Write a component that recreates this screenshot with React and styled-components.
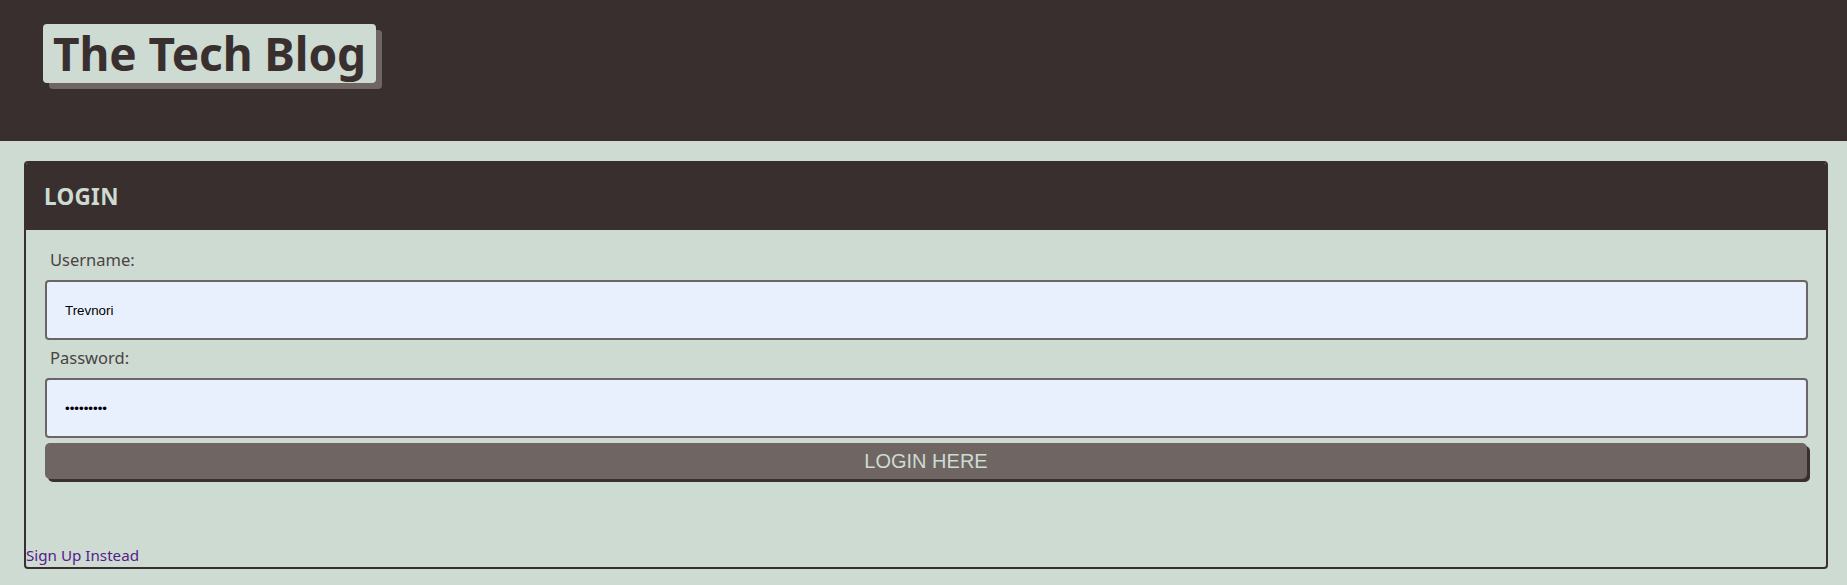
import React from "react";
import styled, { createGlobalStyle } from "styled-components";

const dark = "#392f2f";
const light = "#cddbd2";
const muted = "#6f6664";

const Global = createGlobalStyle`
  html, body { margin: 0; padding: 0; background: ${light}; }
  body { font-family: "Noto Sans", "Open Sans", sans-serif; }
`;

const Header = styled.header`
  background: ${dark};
  height: 141px;
  padding: 24px 0 0 43px;
  box-sizing: border-box;
`;

const Logo = styled.h1`
  display: inline-block;
  margin: 0;
  height: 59px;
  padding: 0 10px 0 10px;
  box-sizing: border-box;
  background: ${light};
  color: ${dark};
  border-radius: 4px;
  box-shadow: 6px 6px 0 ${muted};
  font-size: 46px;
  font-weight: 700;
  line-height: 59px;
  letter-spacing: -0.1px;
`;

const Main = styled.main`
  padding: 20px 19px 15px 24px;
`;

const Card = styled.section`
  border: 2px solid ${dark};
  border-radius: 4px;
  overflow: hidden;
`;

const CardHeader = styled.h2`
  margin: 0;
  background: ${dark};
  color: ${light};
  height: 67px;
  padding: 0 0 0 18px;
  display: flex;
  align-items: center;
  font-size: 22.5px;
  font-weight: 700;
  letter-spacing: 0.3px;
`;

const Form = styled.form`
  display: flex;
  flex-direction: column;
  padding: 16px 18px 0 19px;
`;

const Label = styled.label`
  display: block;
  margin: ${(p) => (p.$first ? "0" : "4px")} 0 7px 5px;
  font-size: 16.5px;
  line-height: 27px;
  color: #4a4343;
`;

const Input = styled.input`
  box-sizing: border-box;
  width: 100%;
  height: 60px;
  border: 2px solid #6b6565;
  border-radius: 4px;
  background: #e8f0fe;
  padding: 0 18px;
  font-family: "Liberation Sans", Arial, sans-serif;
  font-size: 13.33px;
  color: #000;
  outline: none;
`;

const Button = styled.button`
  margin-top: 5px;
  height: 36px;
  width: calc(100% - 1px);
  border: none;
  border-radius: 5px;
  background: ${muted};
  box-shadow: 3px 3px 0 ${dark};
  color: ${light};
  font-family: "Liberation Sans", Arial, sans-serif;
  font-size: 20px;
  cursor: pointer;
`;

const SignUp = styled.a`
  display: inline-block;
  margin-top: 64px;
  font-size: 15.2px;
  line-height: 24px;
  color: #551a8b;
  text-decoration: none;
`;

export default function App() {
  return (
    <>
      <Global />
      <Header>
        <Logo>The Tech Blog</Logo>
      </Header>
      <Main>
        <Card>
          <CardHeader>LOGIN</CardHeader>
          <Form onSubmit={(e) => e.preventDefault()}>
            <Label $first htmlFor="username">Username:</Label>
            <Input id="username" type="text" defaultValue="Trevnori" />
            <Label htmlFor="password">Password:</Label>
            <Input id="password" type="password" defaultValue="123456789" />
            <Button type="submit">LOGIN HERE</Button>
          </Form>
          <SignUp href="#signup">Sign Up Instead</SignUp>
        </Card>
      </Main>
    </>
  );
}
